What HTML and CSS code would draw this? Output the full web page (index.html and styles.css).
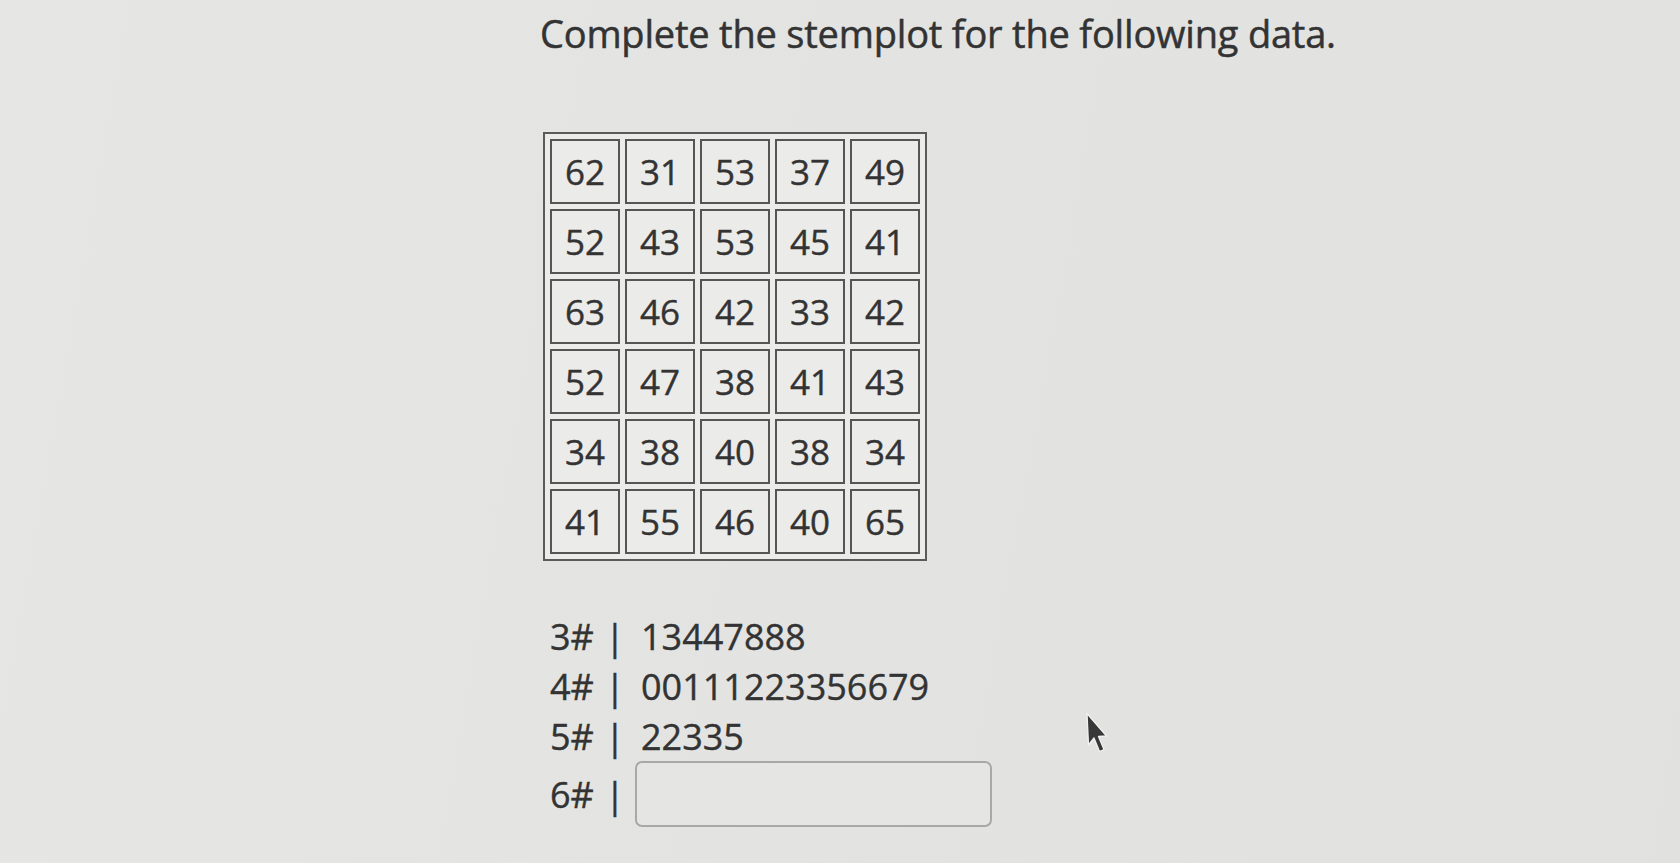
FILE: index.html
```html
<!DOCTYPE html>
<html>
<head>
<meta charset="utf-8">
<link rel="stylesheet" href="styles.css">
</head>
<body>
<main class="page">
  <h1 class="title">Complete the stemplot for the following data.</h1>
  <table class="data">
    <tr><td>62</td><td>31</td><td>53</td><td>37</td><td>49</td></tr>
    <tr><td>52</td><td>43</td><td>53</td><td>45</td><td>41</td></tr>
    <tr><td>63</td><td>46</td><td>42</td><td>33</td><td>42</td></tr>
    <tr><td>52</td><td>47</td><td>38</td><td>41</td><td>43</td></tr>
    <tr><td>34</td><td>38</td><td>40</td><td>38</td><td>34</td></tr>
    <tr><td>41</td><td>55</td><td>46</td><td>40</td><td>65</td></tr>
  </table>
  <div class="stemplot">
    <div class="row"><span class="stem">3#</span><span class="bar">|</span><span class="leaves">13447888</span></div>
    <div class="row"><span class="stem">4#</span><span class="bar">|</span><span class="leaves">00111223356679</span></div>
    <div class="row"><span class="stem">5#</span><span class="bar">|</span><span class="leaves">22335</span></div>
    <div class="row last"><span class="stem">6#</span><span class="bar">|</span><input class="answer" type="text"></div>
  </div>
</main>
<svg class="cursor" width="24" height="42" viewBox="0 0 24 42"><path d="M2 1.5 L3.5 33 L9 26 L14.5 39.5 L19 37.5 L13.5 24.5 L21.5 24 Z" fill="#383838" stroke="#f2f2f2" stroke-width="1.3" stroke-linejoin="round"/></svg>
</body>
</html>
```
FILE: styles.css
```css
html, body {
  margin: 0;
  padding: 0;
  height: 100%;
}
body {
  background: linear-gradient(100deg, #e6e7e5 0%, #e3e4e2 50%, #e1e2e0 100%);
  font-family: "Open Sans", "Noto Sans", sans-serif;
  color: #333;
  overflow: hidden;
  position: relative;
}
.page {
  padding-left: 540px;
  padding-top: 9px;
}
.title {
  margin: 0;
  font-size: 38px;
  font-weight: 400;
  line-height: 48px;
  letter-spacing: -0.2px;
  -webkit-text-stroke: 0.5px #333;
}
.data {
  margin-top: 75px;
  margin-left: 3px;
  border: 2px solid #5a5a5a;
  border-spacing: 5px;
  background: #ebebe9;
}
.data td {
  width: 66px;
  height: 61px;
  padding: 0;
  border: 2px solid #555;
  text-align: center;
  font-size: 35px;
  line-height: 1;
  -webkit-text-stroke: 0.4px #333;
}
.stemplot {
  margin-top: 50px;
  margin-left: 10px;
  font-size: 36px;
  -webkit-text-stroke: 0.4px #333;
}
.row {
  display: flex;
  align-items: center;
  height: 50px;
}
.stem {
  width: 55px;
}
.bar {
  width: 36px;
  font-weight: 400;
}
.row.last {
  height: 66px;
}
.answer {
  width: 357px;
  height: 66px;
  box-sizing: border-box;
  margin-left: -6px;
  border: 2px solid #a8a8a8;
  border-radius: 7px;
  background: #e5e6e4;
}
.cursor {
  position: absolute;
  left: 1085px;
  top: 712px;
}
```
